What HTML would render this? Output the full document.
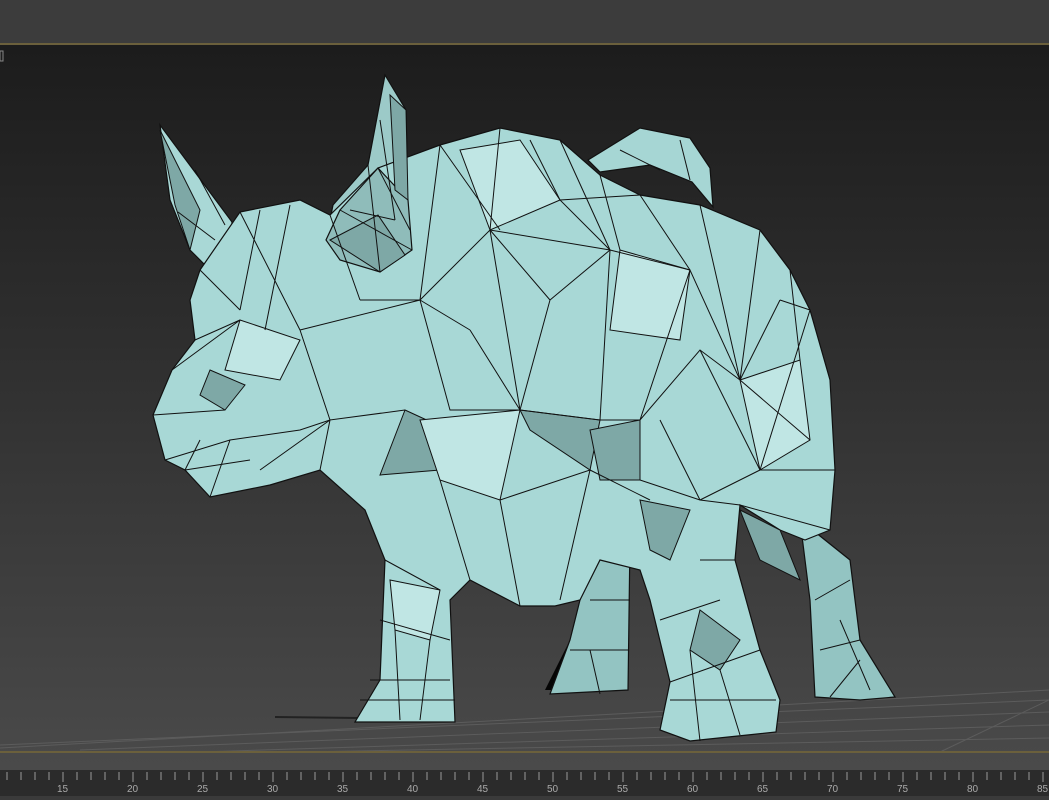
<!DOCTYPE html>
<html><head><style>
html,body{margin:0;padding:0;width:1049px;height:800px;overflow:hidden;background:#2a2a2a}
svg{display:block}
</style></head><body>
<svg width="1049" height="800" viewBox="0 0 1049 800" xmlns="http://www.w3.org/2000/svg">
<defs>
<linearGradient id="bg" x1="0" y1="0" x2="0" y2="1">
<stop offset="0" stop-color="#1c1c1c"/><stop offset="0.45" stop-color="#303030"/><stop offset="1" stop-color="#4a4a4a"/>
</linearGradient>
</defs>
<rect x="0" y="0" width="1049" height="43" fill="#3c3c3c"/>
<rect x="0" y="43" width="1049" height="2" fill="#6b603c"/>
<rect x="0" y="45" width="1049" height="725" fill="url(#bg)"/>
<rect x="0" y="51" width="3" height="10" fill="none" stroke="#888" stroke-width="1"/>
<g stroke="#5c5c5c" stroke-width="1">
<line x1="0" y1="748" x2="1049" y2="690"/>
<line x1="0" y1="745" x2="1049" y2="700"/>
<line x1="80" y1="750" x2="1049" y2="712"/>
<line x1="200" y1="752" x2="1049" y2="725"/>
<line x1="300" y1="752" x2="1049" y2="738"/>
<line x1="940" y1="752" x2="1049" y2="700"/>
</g>
<line x1="275" y1="717" x2="360" y2="718" stroke="#222" stroke-width="2"/>
<rect x="0" y="751" width="1049" height="2" fill="#6b603c"/>
<rect x="0" y="770" width="1049" height="30" fill="#2b2b2b"/>
<rect x="0" y="796" width="1049" height="4" fill="#3a3a3a"/>
<g fill="#aaa" font-family="Liberation Sans, sans-serif" font-size="10">
<text x="57" y="792">15</text><text x="127" y="792">20</text><text x="197" y="792">25</text><text x="267" y="792">30</text><text x="337" y="792">35</text><text x="407" y="792">40</text><text x="477" y="792">45</text><text x="547" y="792">50</text><text x="617" y="792">55</text><text x="687" y="792">60</text><text x="757" y="792">65</text><text x="827" y="792">70</text><text x="897" y="792">75</text><text x="967" y="792">80</text><text x="1037" y="792">85</text>
</g>
<g stroke="#999" stroke-width="1">
<path d="M7 772v8M21 772v8M35 772v8M49 772v8M63 772v10M77 772v8M91 772v8M105 772v8M119 772v8M133 772v10M147 772v8M161 772v8M175 772v8M189 772v8M203 772v10M217 772v8M231 772v8M245 772v8M259 772v8M273 772v10M287 772v8M301 772v8M315 772v8M329 772v8M343 772v10M357 772v8M371 772v8M385 772v8M399 772v8M413 772v10M427 772v8M441 772v8M455 772v8M469 772v8M483 772v10M497 772v8M511 772v8M525 772v8M539 772v8M553 772v10M567 772v8M581 772v8M595 772v8M609 772v8M623 772v10M637 772v8M651 772v8M665 772v8M679 772v8M693 772v10M707 772v8M721 772v8M735 772v8M749 772v8M763 772v10M777 772v8M791 772v8M805 772v8M819 772v8M833 772v10M847 772v8M861 772v8M875 772v8M889 772v8M903 772v10M917 772v8M931 772v8M945 772v8M959 772v8M973 772v10M987 772v8M1001 772v8M1015 772v8M1029 772v8M1043 772v10"/>
</g>
<g fill="#050505">
<polygon points="380,470 470,560 450,600 440,640 420,560 390,520"/>
<polygon points="590,490 630,520 625,620 560,690 545,690 575,630 590,570"/>
<polygon points="380,270 412,255 405,290 385,300"/>
</g>
<g fill="#93c4c2" stroke="#111" stroke-width="1.2">
<polygon points="800,520 850,560 860,640 895,697 860,700 815,697 810,600"/>
<polygon points="590,560 630,540 628,690 550,694 570,640"/>
</g>
<polygon points="588,160 640,128 690,138 710,168 713,207 692,182 650,165 600,172" fill="#a6d6d4" stroke="#111" stroke-width="1.2"/>
<polygon points="160,125 232,222 230,260 215,275 190,250 170,200" fill="#a9d8d6" stroke="#111" stroke-width="1.2"/>
<polygon points="385,75 406,110 408,200 418,230 412,250 380,272 340,260 326,240 333,205 368,165" fill="#9ccac8" stroke="#111" stroke-width="1.2"/>
<polygon fill="#a8d8d6" stroke="#111" stroke-width="1.2" points="200,270 240,212 300,200 330,215 378,168 440,145 500,128 560,140 600,175 640,195 700,205 760,230 790,270 810,310 830,380 835,470 830,530 805,540 780,530 740,505 735,560 760,650 780,700 776,732 690,741 660,730 670,682 650,600 640,570 600,560 580,600 555,606 520,606 470,580 450,600 455,722 355,722 380,680 385,560 365,510 320,470 270,485 210,497 185,470 165,460 153,415 172,370 195,340 190,300"/>
<polygon points="340,210 378,168 408,200 412,250 380,272 340,260 326,240" fill="#8fbcba" stroke="#111" stroke-width="1.2"/>
<g fill="#7ea8a6" stroke="#111" stroke-width="1">
<polygon points="330,240 378,215 405,255 380,272"/>
<polygon points="405,410 470,440 440,470 380,475"/>
<polygon points="520,410 600,420 590,470 530,430"/>
<polygon points="640,500 690,510 670,560 650,550"/>
<polygon points="740,510 780,530 800,580 760,560"/>
<polygon points="590,430 640,420 640,480 600,480"/>
<polygon points="210,370 245,385 225,410 200,395"/>
<polygon points="700,610 740,640 720,670 690,650"/>
<polygon points="160,130 200,210 190,250 175,205"/>
<polygon points="390,95 406,110 408,200 395,190"/>
</g>
<g fill="#c0e6e4" stroke="#111" stroke-width="1">
<polygon points="460,150 520,140 560,200 490,230"/>
<polygon points="420,420 520,410 500,500 440,480"/>
<polygon points="240,320 300,340 280,380 225,370"/>
<polygon points="620,250 690,270 680,340 610,330"/>
<polygon points="740,380 800,360 810,440 760,470"/>
<polygon points="390,580 440,590 430,640 395,630"/>
</g>
<g stroke="#111" stroke-width="1" fill="none">
<path d="M240,212 L300,330 M260,210 L240,310 M290,205 L265,330 M330,215 L360,300 M378,168 L410,230 M440,145 L420,300 M440,145 L500,230 M500,128 L490,230 M560,140 L610,250 M600,175 L620,250 M640,195 L690,270 M700,205 L740,380 M760,230 L740,380 M790,270 L800,360 M810,310 L760,470"/>
<path d="M300,330 L420,300 L490,230 L610,250 L690,270 L740,380 L810,440 M420,300 L450,410 L520,410 L600,420 L640,420 L700,350 L740,380 M490,230 L520,410 M610,250 L600,420 M690,270 L640,420 M300,330 L330,420 L405,410 M330,420 L320,470 M330,420 L260,470"/>
<path d="M172,370 L240,320 M153,415 L225,410 M165,460 L230,440 L300,430 L330,420 M185,470 L250,460 M210,497 L230,440 M195,340 L240,320 M200,270 L240,310"/>
<path d="M440,480 L470,580 M500,500 L520,606 M500,500 L590,470 L560,600 M590,470 L650,500 M640,480 L700,500 L740,505 M700,350 L760,470 M760,470 L835,470 M700,500 L760,470 M740,505 L830,530"/>
<path d="M385,560 L440,590 M380,620 L450,640 M370,680 L450,680 M395,630 L400,720 M430,640 L420,720 M360,700 L455,700"/>
<path d="M660,620 L720,600 M670,682 L760,650 M690,650 L700,741 M720,670 L740,735 M670,700 L776,700 M700,560 L735,560"/>
<path d="M815,600 L850,580 M820,650 L860,640 M830,697 L860,660 M840,620 L870,690"/>
<path d="M590,600 L630,600 M570,650 L628,650 M590,650 L600,694"/>
<path d="M178,212 L215,240 M195,170 L225,225 M380,120 L395,220 M350,210 L395,220 M368,165 L380,272 M340,210 L412,250"/>
<path d="M620,150 L660,170 M680,140 L690,180"/>
<path d="M530,140 L560,200 L610,250 M420,300 L360,300 M560,200 L640,195 M200,440 L185,470 M550,300 L610,250 M550,300 L520,410 M550,300 L490,230 M660,420 L700,500 M780,300 L810,310 M780,300 L740,380 M470,330 L420,300 M470,330 L520,410"/>
</g>
</svg>
</body></html>
